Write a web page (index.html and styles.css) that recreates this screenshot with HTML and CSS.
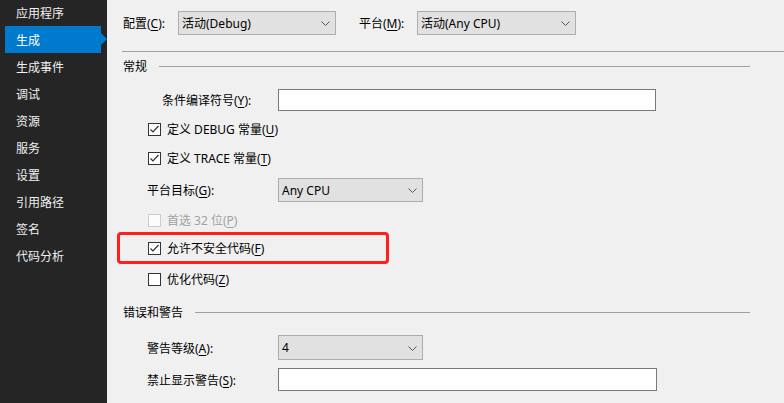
FILE: index.html
```html
<!DOCTYPE html>
<html lang="zh-CN">
<head>
<meta charset="utf-8">
<title>生成</title>
<link rel="stylesheet" href="styles.css">
</head>
<body>
<div class="app">
  <nav class="sidebar">
    <div class="nav-item first">应用程序</div>
    <div class="nav-item active">生成</div>
    <div class="nav-item">生成事件</div>
    <div class="nav-item">调试</div>
    <div class="nav-item">资源</div>
    <div class="nav-item">服务</div>
    <div class="nav-item">设置</div>
    <div class="nav-item">引用路径</div>
    <div class="nav-item">签名</div>
    <div class="nav-item">代码分析</div>
  </nav>
  <main class="content">
    <div class="topbar">
      <span class="top-label cfg">配置(<u>C</u>):</span>
      <div class="select w158"><span>活动(Debug)</span><svg class="chev" width="9" height="5" viewBox="0 0 9 5"><polyline points="0.5,0.5 4.5,4.5 8.5,0.5" fill="none" stroke="#555" stroke-width="1"/></svg></div>
      <span class="top-label plat">平台(<u>M</u>):</span>
      <div class="select w159"><span>活动(Any CPU)</span><svg class="chev" width="9" height="5" viewBox="0 0 9 5"><polyline points="0.5,0.5 4.5,4.5 8.5,0.5" fill="none" stroke="#555" stroke-width="1"/></svg></div>
    </div>
    <div class="sep"></div>

    <div class="group-title t1"><span>常规</span><div class="rule"></div></div>

    <div class="row r-cond">
      <span class="label indent">条件编译符号(<u>Y</u>):</span>
      <div class="textbox w378"></div>
    </div>

    <div class="check r-debug">
      <span class="box"><svg width="11" height="11" viewBox="0 0 11 11"><polyline points="1.5,5.5 4,8 9.5,2" fill="none" stroke="#333" stroke-width="1.2"/></svg></span>
      <span>定义 DEBUG 常量(<u>U</u>)</span>
    </div>
    <div class="check r-trace">
      <span class="box"><svg width="11" height="11" viewBox="0 0 11 11"><polyline points="1.5,5.5 4,8 9.5,2" fill="none" stroke="#333" stroke-width="1.2"/></svg></span>
      <span>定义 TRACE 常量(<u>T</u>)</span>
    </div>

    <div class="row r-target">
      <span class="label">平台目标(<u>G</u>):</span>
      <div class="select w145"><span>Any CPU</span><svg class="chev" width="9" height="5" viewBox="0 0 9 5"><polyline points="0.5,0.5 4.5,4.5 8.5,0.5" fill="none" stroke="#555" stroke-width="1"/></svg></div>
    </div>

    <div class="check disabled r-pref">
      <span class="box"></span>
      <span>首选 32 位(<u>P</u>)</span>
    </div>

    <div class="highlight">
      <div class="check inner">
        <span class="box"><svg width="11" height="11" viewBox="0 0 11 11"><polyline points="1.5,5.5 4,8 9.5,2" fill="none" stroke="#333" stroke-width="1.2"/></svg></span>
        <span>允许不安全代码(<u>F</u>)</span>
      </div>
    </div>

    <div class="check r-opt">
      <span class="box"></span>
      <span>优化代码(<u>Z</u>)</span>
    </div>

    <div class="group-title t2"><span>错误和警告</span><div class="rule"></div></div>

    <div class="row r-level">
      <span class="label">警告等级(<u>A</u>):</span>
      <div class="select w145 h25"><span>4</span><svg class="chev" width="9" height="5" viewBox="0 0 9 5"><polyline points="0.5,0.5 4.5,4.5 8.5,0.5" fill="none" stroke="#555" stroke-width="1"/></svg></div>
    </div>

    <div class="row r-suppress">
      <span class="label">禁止显示警告(<u>S</u>):</span>
      <div class="textbox w379 h23"></div>
    </div>
  </main>
</div>
</body>
</html>
```

FILE: styles.css
```css
* { box-sizing: border-box; }

html, body {
  margin: 0;
  padding: 0;
  width: 784px;
  height: 403px;
  overflow: hidden;
}

body {
  font-family: "Noto Sans", "Noto Sans CJK SC", sans-serif;
  font-size: 12px;
  color: #000;
  background: #f0f0f0;
}

u { text-decoration: underline; text-underline-offset: 2px; }

.app {
  display: flex;
  height: 403px;
}

/* Sidebar */
.sidebar {
  width: 107px;
  flex: none;
  background: #252526;
  display: flex;
  flex-direction: column;
}

.nav-item {
  height: 27px;
  line-height: 27px;
  padding-left: 16px;
  color: #f1f1f1;
  font-family: "Noto Sans CJK SC", sans-serif;
  font-size: 12px;
  white-space: nowrap;
}

.nav-item.first {
  height: 26px;
  line-height: 26px;
}

.nav-item.active {
  position: relative;
  margin-left: 5px;
  width: 96px;
  padding-left: 11px;
  background: #007acc;
  color: #fff;
}

.nav-item.active::after {
  content: "";
  position: absolute;
  right: -6px;
  top: 7px;
  border-top: 6px solid transparent;
  border-bottom: 6px solid transparent;
  border-left: 6px solid #007acc;
}

/* Content */
.content {
  flex: 1;
  display: flex;
  flex-direction: column;
  background: #f0f0f0;
}

.topbar {
  margin-top: 11px;
  height: 24px;
  padding-left: 16px;
  display: flex;
  align-items: center;
}

.top-label { white-space: nowrap; }
.top-label.cfg { width: 55px; }
.top-label.plat { width: 58px; margin-left: 23px; }

.select {
  height: 24px;
  background: #e1e1e1;
  border: 1px solid #adadad;
  display: flex;
  align-items: center;
  justify-content: space-between;
  padding: 0 5px 0 3px;
  white-space: nowrap;
}

.select.h25 { height: 25px; }
.chev { display: block; margin-top: 1px; }

.w158 { width: 158px; }
.w159 { width: 159px; }
.w145 { width: 145px; }
.w378 { width: 378px; }
.w379 { width: 379px; }

.sep {
  margin-top: 16px;
  margin-left: 15px;
  height: 1px;
  background: #a0a0a0;
}

.group-title {
  height: 16px;
  padding-left: 16px;
  padding-right: 34px;
  display: flex;
  align-items: center;
  gap: 12px;
  white-space: nowrap;
}

.group-title .rule {
  flex: 1;
  height: 1px;
  background: #a0a0a0;
}

.t1 { margin-top: 6px; }
.t2 { margin-top: 17px; }

.row {
  display: flex;
  align-items: center;
  padding-left: 40px;
}

.row .label {
  width: 131px;
  flex: none;
  white-space: nowrap;
}

.row .label.indent { padding-left: 15px; }

.textbox {
  height: 22px;
  background: #fff;
  border: 1px solid #7a7a7a;
}

.textbox.h23 { height: 23px; }

.r-cond { margin-top: 15px; height: 22px; }
.r-target { margin-top: 12px; height: 24px; }
.r-level { margin-top: 15px; height: 25px; }
.r-suppress { margin-top: 8px; height: 23px; }

.check {
  height: 16px;
  display: flex;
  align-items: center;
  gap: 6px;
  padding-left: 41px;
  white-space: nowrap;
}

.check .box {
  width: 13px;
  height: 13px;
  flex: none;
  border: 1px solid #333;
  background: #fff;
  display: flex;
  align-items: center;
  justify-content: center;
}

.check .box svg { display: block; }

.check.disabled { color: #a0a0a0; }
.check.disabled .box { border-color: #cccccc; background: #fcfcfc; }

.r-debug { margin-top: 10px; }
.r-trace { margin-top: 13px; }
.r-pref { margin-top: 10px; }
.r-opt { margin-top: 7px; }

.highlight {
  margin-top: 4px;
  margin-left: 10px;
  width: 272px;
  height: 32px;
  border: 3px solid #ff1f1f;
  border-radius: 4px;
  display: flex;
  align-items: center;
}

.check.inner { padding-left: 28px; }
```
